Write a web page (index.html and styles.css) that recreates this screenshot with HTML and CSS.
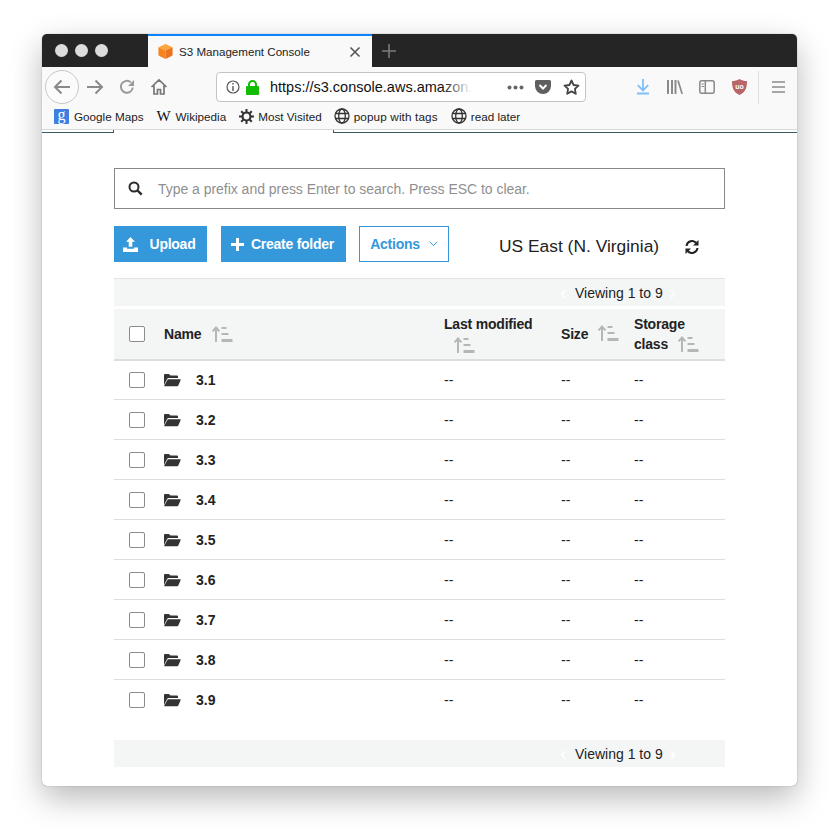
FILE: index.html
```html
<!DOCTYPE html>
<html lang="en">
<head>
<meta charset="utf-8">
<title>S3 Management Console</title>
<link rel="stylesheet" href="styles.css">
</head>
<body>
<svg class="defs" width="0" height="0" aria-hidden="true">
  <defs>
    <symbol id="sort" viewBox="0 0 22 18">
      <path d="M5 17V3M1.600 6.400 5 2.600l3.400 3.800" fill="none" stroke="#b4b7b7" stroke-width="2"/>
      <path d="M10.500 2h5v2h-5zM10.500 8h7v2h-7zM10.500 14h11v3h-11z" fill="#b4b7b7"/>
    </symbol>
    <symbol id="folder" viewBox="0 0 17 14">
      <path d="M0 12V2a1 1 0 0 1 1-1h4l1.500 1.500H13a1 1 0 0 1 1 1V5H4.500a1.500 1.500 0 0 0-1.400.9z" fill="#333"/>
      <path d="M3.800 6.200H16a.7.7 0 0 1 .6 1l-2.300 5.400a1.200 1.200 0 0 1-1.100.7H.8a.5.5 0 0 1-.5-.7z" fill="#333"/>
    </symbol>
    <symbol id="globe" viewBox="0 0 16 16">
      <g fill="none" stroke="#333" stroke-width="1.300">
        <circle cx="8" cy="8" r="7"/>
        <ellipse cx="8" cy="8" rx="3.300" ry="7"/>
        <path d="M1.500 5.500h13M1.500 10.500h13"/>
      </g>
    </symbol>
  </defs>
</svg>

<div class="window">
  <header class="tabbar">
    <div class="lights"><i></i><i></i><i></i></div>
    <div class="tab">
      <svg class="favicon" width="17" height="17" viewBox="0 0 18 18">
        <path d="M9 1 16.500 4.500 9 8 1.500 4.500z" fill="#fba63f"/>
        <path d="M1.500 4.500 9 8v9l-6.500-3.200a1.500 1.500 0 0 1-1-1.300z" fill="#f5841f"/>
        <path d="M16.500 4.500 9 8v9l6.500-3.200a1.500 1.500 0 0 0 1-1.300z" fill="#ea7320"/>
      </svg>
      <span class="tab-title">S3 Management Console</span>
      <svg class="tab-close" width="12" height="12" viewBox="0 0 12 12"><path d="M1.500 1.500l9 9M10.500 1.500l-9 9" stroke="#555" stroke-width="1.600"/></svg>
    </div>
    <svg class="newtab" width="14" height="14" viewBox="0 0 14 14"><path d="M7 0v14M0 7h14" stroke="#7b7b7b" stroke-width="1.600"/></svg>
  </header>

  <nav class="toolbar">
    <div class="back">
      <svg width="20" height="18" viewBox="0 0 20 18"><path d="M18 9H3M9.500 2.500 3 9l6.500 6.500" fill="none" stroke="#8a8a8a" stroke-width="2"/></svg>
    </div>
    <svg class="forward" width="20" height="18" viewBox="0 0 20 18"><path d="M2 9h15M10.500 2.500 17 9l-6.500 6.500" fill="none" stroke="#8a8a8a" stroke-width="2"/></svg>
    <svg class="reload" width="16" height="16" viewBox="0 0 16 16"><path d="M13.800 8.500A6 6 0 1 1 11.800 3.300" fill="none" stroke="#9a9a9a" stroke-width="2"/><path d="M15 1v6H9z" fill="#9a9a9a"/></svg>
    <svg class="home" width="18" height="18" viewBox="0 0 18 18"><path d="M1.500 9 9 2l7.500 7M4 7.500V16h3.500v-4.500h3V16H14V7.500" fill="none" stroke="#777" stroke-width="1.700"/></svg>
    <div class="urlbar">
      <svg class="info" width="14" height="14" viewBox="0 0 14 14"><circle cx="7" cy="7" r="6" fill="none" stroke="#555" stroke-width="1.200"/><path d="M6.300 3h1.400v1.500H6.300zM6.300 6h1.400v5H6.300z" fill="#555"/></svg>
      <svg class="lock" width="13" height="15" viewBox="0 0 13 15"><path d="M3 6.500V4.500a3.500 3.500 0 0 1 7 0v2" fill="none" stroke="#12bc00" stroke-width="2"/><rect y="6" width="13" height="9" rx="1" fill="#12bc00"/></svg>
      <span class="url">https://s3.console.aws.amazon.</span>
      <span class="url-fade"></span>
      <svg class="dots" width="17" height="5" viewBox="0 0 17 5"><circle cx="2.500" cy="2.500" r="2" fill="#666"/><circle cx="8.500" cy="2.500" r="2" fill="#666"/><circle cx="14.500" cy="2.500" r="2" fill="#666"/></svg>
      <svg class="pocket" width="16" height="14" viewBox="0 0 16 14"><path d="M1.500 0h13A1.500 1.500 0 0 1 16 1.500V6A8 8 0 0 1 0 6V1.500A1.500 1.500 0 0 1 1.500 0z" fill="#5f5f5f"/><path d="M4.500 5 8 8.500 11.500 5" fill="none" stroke="#fff" stroke-width="2"/></svg>
      <svg class="star" width="17" height="17" viewBox="0 0 17 17"><path d="M8.500 1.500l2.100 4.500 4.900.6-3.600 3.300.9 4.900-4.300-2.400-4.300 2.400.9-4.900L1.500 6.600l4.900-.6z" fill="none" stroke="#444" stroke-width="1.800" stroke-linejoin="round"/></svg>
    </div>
    <svg class="download" width="14" height="16" viewBox="0 0 14 16"><path d="M7 0v11M1.800 6.200 7 11.400l5.200-5.200" fill="none" stroke="#7ec0f9" stroke-width="1.800"/><path d="M1 14.500h12" stroke="#7ec0f9" stroke-width="2"/></svg>
    <svg class="library" width="16" height="14" viewBox="0 0 16 14"><path d="M1 0v14M5 0v14M8.500 0v14" stroke="#8a8a8a" stroke-width="2"/><path d="M11 .5 15.200 14" stroke="#8a8a8a" stroke-width="1.700"/></svg>
    <svg class="sidebar" width="16" height="14" viewBox="0 0 16 14"><rect x=".8" y=".8" width="14.400" height="12.400" rx="2" fill="none" stroke="#8a8a8a" stroke-width="1.500"/><path d="M6.300 1v12" stroke="#8a8a8a" stroke-width="1.500"/><path d="M2.500 4h2.500M2.500 6.500h2.500" stroke="#8a8a8a"/></svg>
    <svg class="ublock" width="15" height="16" viewBox="0 0 15 16"><path d="M7.500 0C10 1.500 12 2 15 2c0 6-1 11-7.500 14C1 13 0 8 0 2c3 0 5-.5 7.500-2z" fill="#b96466"/><text x="7.500" y="10" class="ublock-text">uo</text></svg>
    <span class="tool-sep"></span>
    <svg class="menu" width="13" height="12" viewBox="0 0 13 12"><path d="M0 1h13M0 6h13M0 11h13" stroke="#8a8a8a" stroke-width="1.500"/></svg>
  </nav>

  <div class="bookmarks">
    <span class="bm bm-maps">
      <span class="g-icon">g</span>Google Maps
    </span>
    <span class="bm bm-wiki"><span class="w-icon">W</span>Wikipedia</span>
    <span class="bm bm-visited">
      <svg width="15" height="15" viewBox="0 0 15 15"><circle cx="7.500" cy="7.500" r="4" fill="none" stroke="#333" stroke-width="2.200"/><path d="M7.500 0v3M7.500 12v3M0 7.500h3M12 7.500h3M2.200 2.200l2.100 2.100M10.700 10.700l2.100 2.100M12.800 2.200l-2.100 2.100M4.300 10.700l-2.100 2.100" stroke="#333" stroke-width="2"/></svg>
      Most Visited
    </span>
    <span class="bm bm-popup"><svg width="16" height="16"><use href="#globe"/></svg>popup with tags</span>
    <span class="bm"><svg width="16" height="16"><use href="#globe"/></svg>read later</span>
  </div>

  <div class="aws-edge"><span class="edge edge-left"></span><span class="edge-gap"></span><span class="edge edge-right"></span></div>

  <main class="page">
    <div class="search">
      <svg class="search-icon" width="15" height="15" viewBox="0 0 15 15"><circle cx="6" cy="6" r="4.500" fill="none" stroke="#2b2b2b" stroke-width="2"/><path d="M9.500 9.500l4.200 4.200" stroke="#2b2b2b" stroke-width="2.400"/></svg>
      <span class="search-placeholder">Type a prefix and press Enter to search. Press ESC to clear.</span>
    </div>

    <div class="actions">
      <button class="btn btn-upload">
        <svg width="15" height="15" viewBox="0 0 15 15"><path d="M7.500 0 12 4.800H9.300v5H5.700v-5H3z" fill="#fff"/><path d="M0 10.500h4v1.200h7v-1.200h4V15H0z" fill="#fff"/></svg>
        Upload
      </button>
      <button class="btn btn-create">
        <svg width="13" height="13" viewBox="0 0 13 13"><path d="M6.500 0v13M0 6.500h13" stroke="#fff" stroke-width="3"/></svg>
        Create folder
      </button>
      <button class="btn-actions">Actions
        <svg width="9" height="6" viewBox="0 0 9 6"><path d="M.7.800 4.500 4.600 8.300.8" fill="none" stroke="#3498db" stroke-width="1"/></svg>
      </button>
      <span class="region">US East (N. Virginia)</span>
      <svg class="refresh" width="14" height="14" viewBox="0 0 14 14"><path d="M1.500 6A5.600 5.600 0 0 1 11.300 3" fill="none" stroke="#222" stroke-width="2"/><path d="M13.500 0v5.500H8z" fill="#222"/><path d="M12.500 8A5.600 5.600 0 0 1 2.700 11" fill="none" stroke="#222" stroke-width="2"/><path d="M.5 14V8.500H6z" fill="#222"/></svg>
    </div>

    <div class="pager pager-top">
      <span class="chev chev-prev">‹</span><span>Viewing 1 to 9</span><span class="chev">›</span>
    </div>

    <div class="thead">
      <span class="cell-check"><span class="box"></span></span>
      <span class="cell-name">Name <svg class="sort" width="22" height="18"><use href="#sort"/></svg></span>
      <span class="cell-mod">Last modified<br><svg class="sort sort-mod" width="22" height="18"><use href="#sort"/></svg></span>
      <span class="cell-size">Size <svg class="sort" width="22" height="18"><use href="#sort"/></svg></span>
      <span class="cell-class">Storage<br>class <svg class="sort" width="22" height="18"><use href="#sort"/></svg></span>
    </div>

    <div class="row"><span class="cell-check"><span class="box"></span></span><span class="cell-name"><svg class="folder" width="17" height="14"><use href="#folder"/></svg><b>3.1</b></span><span class="cell-mod">--</span><span class="cell-size">--</span><span class="cell-class">--</span></div>
    <div class="row"><span class="cell-check"><span class="box"></span></span><span class="cell-name"><svg class="folder" width="17" height="14"><use href="#folder"/></svg><b>3.2</b></span><span class="cell-mod">--</span><span class="cell-size">--</span><span class="cell-class">--</span></div>
    <div class="row"><span class="cell-check"><span class="box"></span></span><span class="cell-name"><svg class="folder" width="17" height="14"><use href="#folder"/></svg><b>3.3</b></span><span class="cell-mod">--</span><span class="cell-size">--</span><span class="cell-class">--</span></div>
    <div class="row"><span class="cell-check"><span class="box"></span></span><span class="cell-name"><svg class="folder" width="17" height="14"><use href="#folder"/></svg><b>3.4</b></span><span class="cell-mod">--</span><span class="cell-size">--</span><span class="cell-class">--</span></div>
    <div class="row"><span class="cell-check"><span class="box"></span></span><span class="cell-name"><svg class="folder" width="17" height="14"><use href="#folder"/></svg><b>3.5</b></span><span class="cell-mod">--</span><span class="cell-size">--</span><span class="cell-class">--</span></div>
    <div class="row"><span class="cell-check"><span class="box"></span></span><span class="cell-name"><svg class="folder" width="17" height="14"><use href="#folder"/></svg><b>3.6</b></span><span class="cell-mod">--</span><span class="cell-size">--</span><span class="cell-class">--</span></div>
    <div class="row"><span class="cell-check"><span class="box"></span></span><span class="cell-name"><svg class="folder" width="17" height="14"><use href="#folder"/></svg><b>3.7</b></span><span class="cell-mod">--</span><span class="cell-size">--</span><span class="cell-class">--</span></div>
    <div class="row"><span class="cell-check"><span class="box"></span></span><span class="cell-name"><svg class="folder" width="17" height="14"><use href="#folder"/></svg><b>3.8</b></span><span class="cell-mod">--</span><span class="cell-size">--</span><span class="cell-class">--</span></div>
    <div class="row row-last"><span class="cell-check"><span class="box"></span></span><span class="cell-name"><svg class="folder" width="17" height="14"><use href="#folder"/></svg><b>3.9</b></span><span class="cell-mod">--</span><span class="cell-size">--</span><span class="cell-class">--</span></div>

    <div class="pager pager-bottom">
      <span class="chev chev-prev">‹</span><span>Viewing 1 to 9</span><span class="chev">›</span>
    </div>
  </main>
</div>
</body>
</html>
```
FILE: styles.css
```css
* { box-sizing: border-box; }
html, body { margin: 0; padding: 0; height: 100%; overflow: hidden; }
body {
  background: #fff;
  padding: 34px 42px 0;
  font-family: "Liberation Sans", Arial, sans-serif;
  color: #222;
}
.defs { position: absolute; }

.window {
  width: 755px;
  height: 752px;
  border-radius: 5px;
  overflow: hidden;
  background: #fff;
  box-shadow: 0 0 1px rgba(0,0,0,.55), 0 12px 32px rgba(0,0,0,.28);
}

/* tab strip */
.tabbar {
  height: 33px;
  background: #252525;
  display: flex;
  align-items: center;
}
.lights { width: 106px; display: flex; gap: 7px; padding-left: 13px; }
.lights i { width: 13px; height: 13px; border-radius: 50%; background: #dcdcdc; }
.tab {
  width: 224px;
  height: 33px;
  background: #f9f9fa;
  border-top: 2px solid #0a84ff;
  display: flex;
  align-items: center;
  padding-left: 9px;
}
.favicon { margin-right: 5px; flex: none; }
.tab-title { font-size: 11.6px; color: #222; width: 170px; white-space: nowrap; }
.tab-close { flex: none; }
.newtab { margin-left: 10px; }

/* toolbar */
.toolbar {
  height: 38px;
  padding-top: 2px;
  background: #f9f9fa;
  display: flex;
  align-items: center;
}
.back {
  width: 34px;
  height: 34px;
  margin-left: 3px;
  border: 1px solid #c8c8c8;
  border-radius: 50%;
  background: #fbfbfb;
  display: flex;
  align-items: center;
  justify-content: center;
  flex: none;
}
.forward { margin-left: 6px; }
.reload { margin-left: 14px; }
.home { margin-left: 15px; }
.urlbar {
  width: 370px;
  height: 30px;
  margin-left: 48px;
  background: #fff;
  border: 1px solid #c4c4c4;
  border-radius: 4px;
  display: flex;
  align-items: center;
  padding: 0 5px 0 9px;
  position: relative;
}
.lock { margin-left: 6px; flex: none; }
.info { flex: none; }
.url { margin-left: 11px; font-size: 14.5px; color: #111; white-space: nowrap; flex: none; }
.url-fade {
  position: absolute;
  left: 225px;
  width: 30px;
  top: 0;
  bottom: 0;
  background: linear-gradient(to right, rgba(255,255,255,0), #fff);
}
.dots { margin-left: auto; flex: none; }
.pocket { margin-left: 11px; flex: none; }
.star { margin-left: 12px; flex: none; }
.download { margin-left: 50px; }
.library { margin-left: 17px; }
.sidebar { margin-left: 16px; }
.ublock { margin-left: 17px; }
.ublock-text { font-size: 7px; fill: #fff; text-anchor: middle; font-weight: 700; }
.tool-sep { width: 1px; height: 33px; background: #dedede; margin-left: 11px; }
.menu { margin-left: 13px; }

/* bookmarks */
.bookmarks {
  height: 25px;
  padding: 0 0 2px 12px;
  background: #f9f9fa;
  border-bottom: 1px solid #d9d9d9;
  display: flex;
  align-items: center;
  font-size: 11.7px;
  color: #222;
}
.bm { display: inline-flex; align-items: center; gap: 4px; white-space: nowrap; margin-right: 12px; }
.bm-maps { gap: 5px; margin-right: 13px; }
.bm-wiki { margin-right: 14px; gap: 5px; }
.bm-visited { margin-right: 12px; margin-left: -1px; }
.bm-popup { margin-right: 13px; letter-spacing: .15px; }
.g-icon {
  width: 15px; height: 15px;
  background: #3f7fe0; color: #fff;
  border-radius: 1px;
  font-size: 16px;
  text-align: center; line-height: 12px;
  font-family: "Liberation Serif", serif;
}
.w-icon { width: 14px; text-align: center; font-family: "Liberation Serif", serif; font-size: 15px; color: #111; }

.aws-edge { height: 3px; display: flex; }
.edge { height: 3px; border-bottom: 1px solid #3c5a68; }
.edge-left { width: 72px; border-right: 1px solid #3c5a68; }
.edge-gap { width: 219px; }
.edge-right { flex: 1; border-left: 1px solid #3c5a68; }

/* page */
.page { padding: 35px 72px 0; }
.search {
  height: 41px;
  border: 1px solid #888;
  display: flex;
  align-items: center;
  padding-left: 13px;
}
.search-icon { flex: none; }
.search-placeholder { margin-left: 15px; font-size: 14px; letter-spacing: -.03px; color: #8f8f8f; white-space: nowrap; }

.actions { margin-top: 17px; height: 36px; display: flex; align-items: center; }
.btn {
  height: 36px;
  border: 0;
  padding: 0;
  background: #3498db;
  color: #fff;
  font: 700 14px "Liberation Sans", Arial, sans-serif;
  letter-spacing: -.25px;
  display: flex;
  align-items: center;
  justify-content: center;
}
.btn-upload { width: 93px; gap: 12px; padding-right: 3px; }
.btn-create { width: 125px; margin-left: 14px; gap: 7px; padding-right: 2px; }
.btn-actions {
  width: 90px;
  height: 36px;
  margin-left: 13px;
  border: 1px solid #3498db;
  background: #fff;
  color: #3498db;
  font: 700 14px "Liberation Sans", Arial, sans-serif;
  letter-spacing: -.25px;
  padding: 0;
  display: flex;
  align-items: center;
  justify-content: center;
  gap: 9px;
}
.region { margin: 5px 0 0 50px; font-size: 17.4px; color: #222; white-space: nowrap; }
.refresh { margin-left: 26px; margin-top: 6px; flex: none; }

.pager {
  height: 28px;
  background: #f4f6f6;
  display: flex;
  align-items: center;
  padding-left: 438px;
  font-size: 14px;
  color: #222;
}
.pager-top { margin-top: 16px; border-top: 1px solid #e3e5e5; }
.pager-bottom { margin-top: 20px; height: 27px; }
.chev { width: 20px; color: #fff; font-size: 20px; text-align: center; }
.chev-prev { width: 23px; }

.thead, .row { display: flex; align-items: center; font-size: 14px; }
.thead {
  margin-top: 3px;
  height: 52px;
  background: #f4f6f6;
  border-bottom: 2px solid #dddede;
  font-weight: 700;
  line-height: 20px;
  letter-spacing: -.2px;
}
.row { height: 40px; border-bottom: 1px solid #dedede; }
.thead + .row { height: 39px; }
.row-last { border-bottom: 0; }
.cell-check { width: 50px; padding-left: 15px; flex: none; display: flex; }
.cell-name { width: 280px; flex: none; display: flex; align-items: center; }
.cell-mod { width: 117px; flex: none; }
.cell-size { width: 73px; flex: none; display: flex; align-items: center; }
.cell-class { flex: 1; white-space: nowrap; }
.box {
  width: 16px;
  height: 16px;
  background: #fff;
  border: 1px solid #8c8c8c;
  border-radius: 2px;
}
.sort { vertical-align: middle; }
.cell-name .sort { margin-left: 10px; }
.cell-size .sort { margin-left: 9px; margin-top: -2px; }
.sort-mod { margin-left: 9px; }
.cell-class .sort { margin-left: 5px; margin-top: -2px; }
.folder { flex: none; margin-right: 15px; }
.row b { font-weight: 700; }
```
